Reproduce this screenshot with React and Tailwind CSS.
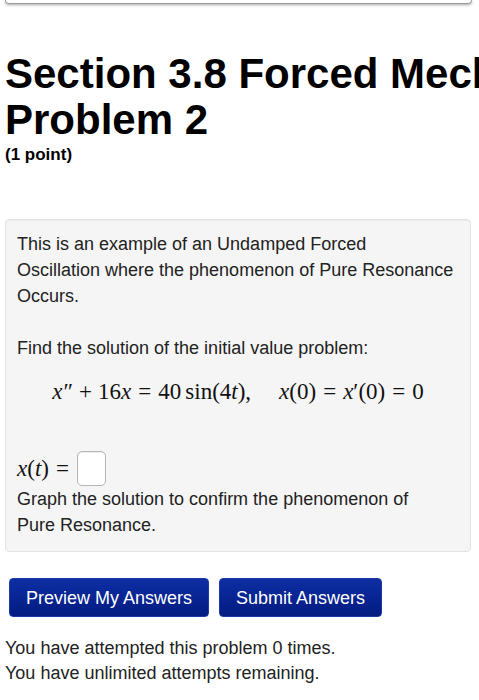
import React from "react";

const sans = { fontFamily: '"Liberation Sans", Arial, Helvetica, sans-serif' };
const serif = { fontFamily: '"Liberation Serif", "Times New Roman", serif' };

function MI({ children }) {
  return <span className="italic">{children}</span>;
}

export default function App() {
  return (
    <div className="w-[479px] h-[700px] overflow-hidden bg-white text-[#222]" style={sans}>
      <div className="mx-[5px] mr-[7px] h-[4px] border-x border-b border-[#9a9a9a] rounded-b-[4px] shadow-[0_1px_3px_rgba(0,0,0,0.35)]" />

      <div className="px-[5px]">
        <h1 className="mt-[47px] text-[42px] leading-[46px] font-bold text-black">
          <div className="whitespace-nowrap">Section 3.8 Forced Mechanical Vibrations</div>
          <div>Problem 2</div>
        </h1>
        <div className="mt-[2px] text-[17px] leading-[20px] font-bold text-black">(1 point)</div>

        <div className="mt-[54px] w-[466px] rounded-[4px] border border-[#e3e3e3] bg-[#f5f5f5] px-[11px] pt-[11px] pb-[13px] text-[18px] leading-[26px] shadow-[inset_0_1px_1px_rgba(0,0,0,0.04)]">
          <p>
            This is an example of an Undamped Forced
            <br />
            Oscillation where the phenomenon of Pure Resonance
            <br />
            Occurs.
          </p>
          <p className="mt-[26px]">Find the solution of the initial value problem:</p>

          <div
            className="mt-[19px] mb-[47px] h-[24px] flex items-center justify-center text-[23px] leading-[24px] text-[#111] whitespace-nowrap"
            style={serif}
          >
            <MI>x</MI>
            <span className="ml-[1px]">″</span>
            <span className="mx-[6px]">+</span>
            <span>16</span>
            <MI>x</MI>
            <span className="mx-[7px]">=</span>
            <span>40</span>
            <span className="ml-[4px]">sin(4</span>
            <MI>t</MI>
            <span>),</span>
            <span className="w-[28px]" />
            <MI>x</MI>
            <span>(0)</span>
            <span className="mx-[7px]">=</span>
            <MI>x</MI>
            <span>′(0)</span>
            <span className="mx-[7px]">=</span>
            <span>0</span>
          </div>

          <div className="flex items-center h-[35px]">
            <span className="text-[23px] leading-[24px] text-[#111] whitespace-nowrap" style={serif}>
              <MI>x</MI>(<MI>t</MI>)<span className="ml-[7px]">=</span>
            </span>
            <div className="ml-[8px] w-[29px] h-[35px] rounded-[5px] border border-[#b5b5b5] bg-white shadow-[inset_0_1px_1px_rgba(0,0,0,0.08)]" />
          </div>

          <p>
            Graph the solution to confirm the phenomenon of
            <br />
            Pure Resonance.
          </p>
        </div>

        <div className="mt-[26px] ml-[4px] flex gap-[10px]">
          <button className="h-[39px] px-[16px] rounded-[4px] border border-[#1c3aa8] bg-gradient-to-b from-[#0d2ea3] to-[#041b82] text-white text-[18px] leading-[22px]">
            Preview My Answers
          </button>
          <button className="h-[39px] px-[16px] rounded-[4px] border border-[#1c3aa8] bg-gradient-to-b from-[#0d2ea3] to-[#041b82] text-white text-[18px] leading-[22px]">
            Submit Answers
          </button>
        </div>

        <div className="mt-[19px] text-[18px] leading-[25px]">
          <div>You have attempted this problem 0 times.</div>
          <div>You have unlimited attempts remaining.</div>
        </div>
      </div>
    </div>
  );
}
